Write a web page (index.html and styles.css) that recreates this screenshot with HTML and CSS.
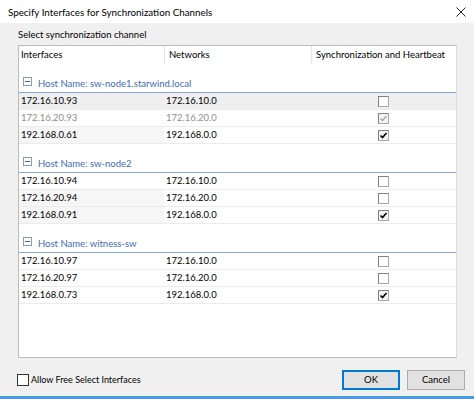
FILE: index.html
```html
<!DOCTYPE html>
<html lang="en">
<head>
  <meta charset="UTF-8">
  <title>Specify Interfaces for Synchronization Channels</title>
  <link rel="stylesheet" href="styles.css">
</head>
<body>
  <div class="window">
    <div class="titlebar">
      <span class="title">Specify Interfaces for Synchronization Channels</span>
      <svg class="close" width="10" height="10" viewBox="0 0 10 10"><path d="M0.5 0.5 L9.5 9.5 M9.5 0.5 L0.5 9.5" stroke="#222" stroke-width="1"/></svg>
    </div>

    <div class="content">
      <div class="caption">Select synchronization channel</div>

      <div class="grid">
        <div class="row head">
          <div class="cell">Interfaces</div>
          <div class="cell sep">Networks</div>
          <div class="cell sep">Synchronization and Heartbeat</div>
        </div>

        <!-- groupe 1 -->
        <div class="group">
          <svg class="toggle" width="9" height="9" viewBox="0 0 9 9"><rect x="0.5" y="0.5" width="8" height="8" fill="#fff" stroke="#8a9bb8"/><path d="M2 4.5 H7" stroke="#3f5f95"/></svg>
          <span>Host Name: sw-node1.starwind.local</span>
        </div>
        <div class="row data first">
          <div class="cell">172.16.10.93</div>
          <div class="cell">172.16.10.0</div>
          <div class="cell check"><span class="box"></span></div>
        </div>
        <div class="row data disabled">
          <div class="cell">172.16.20.93</div>
          <div class="cell">172.16.20.0</div>
          <div class="cell check"><span class="box on grey"><svg width="9" height="9" viewBox="0 0 9 9"><path d="M1.5 4.5 L3.5 6.5 L7.5 2" fill="none" stroke="#a6a6a6" stroke-width="1.3"/></svg></span></div>
        </div>
        <div class="row data">
          <div class="cell shade">192.168.0.61</div>
          <div class="cell">192.168.0.0</div>
          <div class="cell check"><span class="box on"><svg width="9" height="9" viewBox="0 0 9 9"><path d="M1.5 4.5 L3.5 6.5 L7.5 2" fill="none" stroke="#000" stroke-width="1.6"/></svg></span></div>
        </div>

        <!-- groupe 2 -->
        <div class="group">
          <svg class="toggle" width="9" height="9" viewBox="0 0 9 9"><rect x="0.5" y="0.5" width="8" height="8" fill="#fff" stroke="#8a9bb8"/><path d="M2 4.5 H7" stroke="#3f5f95"/></svg>
          <span>Host Name: sw-node2</span>
        </div>
        <div class="row data">
          <div class="cell">172.16.10.94</div>
          <div class="cell">172.16.10.0</div>
          <div class="cell check"><span class="box"></span></div>
        </div>
        <div class="row data">
          <div class="cell shade">172.16.20.94</div>
          <div class="cell">172.16.20.0</div>
          <div class="cell check"><span class="box"></span></div>
        </div>
        <div class="row data">
          <div class="cell shade">192.168.0.91</div>
          <div class="cell">192.168.0.0</div>
          <div class="cell check"><span class="box on"><svg width="9" height="9" viewBox="0 0 9 9"><path d="M1.5 4.5 L3.5 6.5 L7.5 2" fill="none" stroke="#000" stroke-width="1.6"/></svg></span></div>
        </div>

        <!-- groupe 3 -->
        <div class="group">
          <svg class="toggle" width="9" height="9" viewBox="0 0 9 9"><rect x="0.5" y="0.5" width="8" height="8" fill="#fff" stroke="#8a9bb8"/><path d="M2 4.5 H7" stroke="#3f5f95"/></svg>
          <span>Host Name: witness-sw</span>
        </div>
        <div class="row data">
          <div class="cell">172.16.10.97</div>
          <div class="cell">172.16.10.0</div>
          <div class="cell check"><span class="box"></span></div>
        </div>
        <div class="row data">
          <div class="cell">172.16.20.97</div>
          <div class="cell">172.16.20.0</div>
          <div class="cell check"><span class="box"></span></div>
        </div>
        <div class="row data">
          <div class="cell">192.168.0.73</div>
          <div class="cell">192.168.0.0</div>
          <div class="cell check"><span class="box on"><svg width="9" height="9" viewBox="0 0 9 9"><path d="M1.5 4.5 L3.5 6.5 L7.5 2" fill="none" stroke="#000" stroke-width="1.6"/></svg></span></div>
        </div>
      </div>
    </div>

    <div class="footer">
      <label class="free"><span class="free-box"></span>Allow Free Select Interfaces</label>
      <div class="buttons">
        <button class="btn default" type="button">OK</button>
        <button class="btn" type="button">Cancel</button>
      </div>
    </div>
    <div class="edge"></div>
  </div>
</body>
</html>
```

FILE: styles.css
```css
body{
  margin: 0;
  font-family: Lato, "Noto Sans", sans-serif;
  font-size: 9.5px;
  color: #000;
}
.window{
  width: 474px;
  height: 399px;
  background: #f0f0f0;
  display: flex;
  flex-direction: column;
}
.titlebar{
  height: 23px;
  background: #fff;
  display: flex;
  align-items: center;
  justify-content: space-between;
  padding: 0 8px 0 8px;
}
.title{
  font-size: 9.8px;
  color: #000;
}
.content{
  padding: 4px 17px 0 18px;
}
.caption{
  height: 18px;
  line-height: 16px;
}
.grid{
  height: 311px;
  background: #fff;
  border: 1px solid #bcbcbc;
  border-right-color: #dcdcdc;
}
.row{
  display: grid;
  grid-template-columns: 145px 147px 1fr;
}
.head{
  height: 18px;
}
.head .cell{
  line-height: 18px;
  padding-left: 2px;
}
.head .sep{
  border-left: 1px solid #e5e5e5;
  padding-left: 4px;
}
.cell{
  padding-left: 2px;
  white-space: nowrap;
  overflow: hidden;
}
.group{
  height: 29px;
  border-bottom: 1px solid #86a6d8;
  display: flex;
  align-items: flex-end;
  padding: 0 0 3px 4px;
  box-sizing: border-box;
  color: #3f6cb5;
}
.group .toggle{
  margin: 0 6px 3px 0;
}
.data{
  height: 17px;
  border-bottom: 1px solid #ececec;
  box-sizing: border-box;
}
.data .cell{
  line-height: 16px;
}
.first{
  background: #efefef;
}
.shade{
  background: #f6f6f6;
}
.disabled{
  color: #8e8e8e;
}
.check{
  display: flex;
  justify-content: center;
  align-items: center;
  padding-left: 0;
}
.box{
  width: 9px;
  height: 9px;
  border: 1px solid #a8a8a8;
  border-top-color: #808080;
  border-left-color: #808080;
  background: #fff;
  display: flex;
  align-items: center;
  justify-content: center;
}
.box.on{
  background: #f4f4f4;
}
.footer{
  flex: 1;
  display: flex;
  align-items: center;
  justify-content: space-between;
  padding: 5px 9px 0 17px;
}
.free{
  display: flex;
  align-items: center;
  font-size: 9px;
}
.free-box{
  width: 10px;
  height: 10px;
  border: 1px solid #333;
  background: #fff;
  margin-right: 2px;
}
.buttons{
  display: flex;
  gap: 7px;
}
.btn{
  width: 58px;
  height: 20px;
  font-family: inherit;
  font-size: 9.5px;
  background: #e1e1e1;
  border: 1px solid #adadad;
  padding: 0;
  color: #000;
}
.default{
  border: 1px solid #0078d7;
  box-shadow: inset 0 0 0 1px #0078d7;
}
.edge{
  height: 3px;
  background: #4f9ad8;
}
```
